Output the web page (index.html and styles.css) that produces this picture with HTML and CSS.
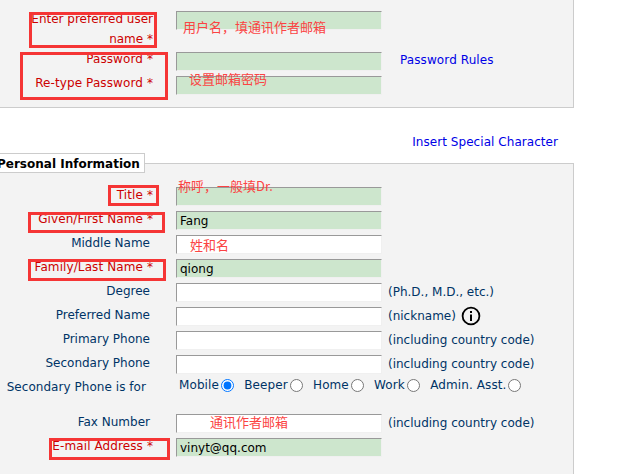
FILE: index.html
```html
<!DOCTYPE html>
<html lang="en">
<head>
    <meta charset="UTF-8">
    <title>Create an Account</title>
    <link rel="stylesheet" href="styles.css">
</head>
<body>
    <div class="page">
        <div class="panel">
            <div class="row">
                <label class="required first">Enter preferred user name *</label>
                <input type="text" class="req">
            </div>
            <div class="row">
                <label class="required">Password *</label>
                <input type="password" class="req">
                <a class="rules" href="#">Password Rules</a>
            </div>
            <div class="row">
                <label class="required">Re-type Password *</label>
                <input type="password" class="req">
            </div>
        </div>

        <div class="special"><a href="#">Insert Special Character</a></div>

        <fieldset class="panel-set">
            <legend>Personal Information</legend>
            <div class="row">
                <label class="required">Title *</label>
                <input type="text" class="req">
            </div>
            <div class="row">
                <label class="required">Given/First Name *</label>
                <input type="text" class="req" value="Fang">
            </div>
            <div class="row">
                <label>Middle Name</label>
                <input type="text">
            </div>
            <div class="row">
                <label class="required">Family/Last Name *</label>
                <input type="text" class="req" value="qiong">
            </div>
            <div class="row">
                <label>Degree</label>
                <input type="text">
                <span class="hint">(Ph.D., M.D., etc.)</span>
            </div>
            <div class="row">
                <label>Preferred Name</label>
                <input type="text">
                <span class="hint">(nickname)
                    <svg class="info" width="20" height="20" viewBox="0 0 20 20">
                        <circle cx="10" cy="10" r="8.4" fill="none" stroke="#000" stroke-width="1.8"/>
                        <rect x="9" y="8.5" width="2" height="6.5"/>
                        <rect x="9" y="5" width="2" height="2"/>
                    </svg>
                </span>
            </div>
            <div class="row">
                <label>Primary Phone</label>
                <input type="text">
                <span class="hint">(including country code)</span>
            </div>
            <div class="row">
                <label>Secondary Phone</label>
                <input type="text">
                <span class="hint">(including country code)</span>
            </div>
            <div class="row row-radio">
                <label class="wide">Secondary Phone is for</label>
                <div class="radios">
                    <label>Mobile<input type="radio" name="phone" checked></label>
                    <label>Beeper<input type="radio" name="phone"></label>
                    <label>Home<input type="radio" name="phone"></label>
                    <label>Work<input type="radio" name="phone"></label>
                    <label>Admin. Asst.<input type="radio" name="phone"></label>
                </div>
            </div>
            <div class="row">
                <label>Fax Number</label>
                <input type="text">
                <span class="hint">(including country code)</span>
            </div>
            <div class="row">
                <label class="required">E-mail Address *</label>
                <input type="text" class="req" value="vinyt@qq.com">
            </div>
        </fieldset>
    </div>

    <!-- annotations drawn over the form -->
    <div class="mark" style="left:29px;top:12px;width:128px;height:36px"></div>
    <div class="mark" style="left:20px;top:52px;width:148px;height:48px"></div>
    <div class="mark" style="left:108px;top:185px;width:51px;height:21px"></div>
    <div class="mark" style="left:28px;top:212px;width:137px;height:21px"></div>
    <div class="mark" style="left:28px;top:259px;width:138px;height:22px"></div>
    <div class="mark" style="left:49px;top:438px;width:121px;height:22px"></div>

    <span class="note" style="left:183px;top:19px">用户名，填通讯作者邮箱</span>
    <span class="note" style="left:189px;top:71px">设置邮箱密码</span>
    <span class="note" style="left:178px;top:178px">称呼，一般填Dr.</span>
    <span class="note" style="left:190px;top:237px">姓和名</span>
    <span class="note" style="left:210px;top:414px">通讯作者邮箱</span>
</body>
</html>
```

FILE: styles.css
```css
html, body {
    margin: 0;
    height: 474px;
    overflow: hidden;
    background: white;
}
body {
    position: relative;
    font-family: "DejaVu Sans", Verdana, sans-serif;
    font-size: 12px;
    color: #003366;
}
.page {
    width: 582px;
    margin-left: -8px;
}
.panel {
    box-sizing: border-box;
    height: 108px;
    padding: 8px 0 0 8px;
    background: #f3f3f3;
    border-right: 1px solid #ccc;
    border-bottom: 1px solid #ccc;
}
.panel .row > label {
    padding-top: 0;
}
.panel .row > label.first {
    padding-top: 1px;
    letter-spacing: 0;
}
.special {
    height: 45px;
    padding: 24px 16px 0 0;
    box-sizing: border-box;
    line-height: 20px;
    letter-spacing: 0.05px;
    text-align: right;
}
a {
    color: #0000e6;
    text-decoration: none;
}
.panel-set {
    box-sizing: border-box;
    margin: 0;
    min-width: 0;
    padding: 11px 0 15px 7px;
    background: #f3f3f3;
    border: 1px solid #ccc;
    border-bottom: none;
}
.panel-set legend {
    box-sizing: border-box;
    height: 20px;
    margin-left: -8px;
    padding: 0 4px;
    line-height: 20px;
    font-weight: bold;
    color: #000;
    background: white;
    border: 1px solid #ccc;
}
.row {
    display: grid;
    grid-template-columns: 154px 206px 1fr;
    column-gap: 22px;
    min-height: 24px;
    align-items: start;
}
.row > label {
    padding: 1px 4px 0 0;
    line-height: 20px;
    text-align: right;
}
.row > label.required {
    padding-right: 1px;
    padding-left: 26px;
    letter-spacing: 0.1px;
    color: #cc0000;
}
.row > label.wide {
    margin-left: -20px;
    padding-right: 8px;
    letter-spacing: 0.05px;
    white-space: nowrap;
}
.row input[type="text"],
.row input[type="password"] {
    box-sizing: border-box;
    width: 206px;
    height: 19px;
    margin: 3px 0 0 0;
    padding: 0 3px;
    font: 12px "DejaVu Sans", Verdana, sans-serif;
    color: #000;
    background: white;
    border: 1px solid #f0f0f0;
    border-top-color: #999;
    border-left-color: #999;
    outline: none;
}
.row input.req {
    background: #cde6cd;
}
.hint {
    display: flex;
    align-items: center;
    gap: 5px;
    margin: 2px 0 0 -16px;
    line-height: 20px;
    white-space: nowrap;
}
.info {
    flex: none;
    margin-top: -1px;
}
.rules {
    margin: 1px 0 0 -4px;
    line-height: 20px;
    letter-spacing: 0.1px;
}
.row-radio {
    min-height: 35px;
}
.radios {
    display: flex;
    grid-column: 2 / 4;
    gap: 10.25px;
    margin-left: 3px;
    letter-spacing: 0.1px;
}
.radios label {
    display: flex;
    align-items: center;
    height: 18px;
}
.radios input {
    margin: 0 0 0 2px;
}
.mark {
    position: absolute;
    box-sizing: border-box;
    border: 3px solid #f53535;
}
.note {
    position: absolute;
    font-family: "Noto Sans CJK SC", sans-serif;
    font-size: 13px;
    line-height: 16px;
    color: #fb4343;
    white-space: nowrap;
}
```
